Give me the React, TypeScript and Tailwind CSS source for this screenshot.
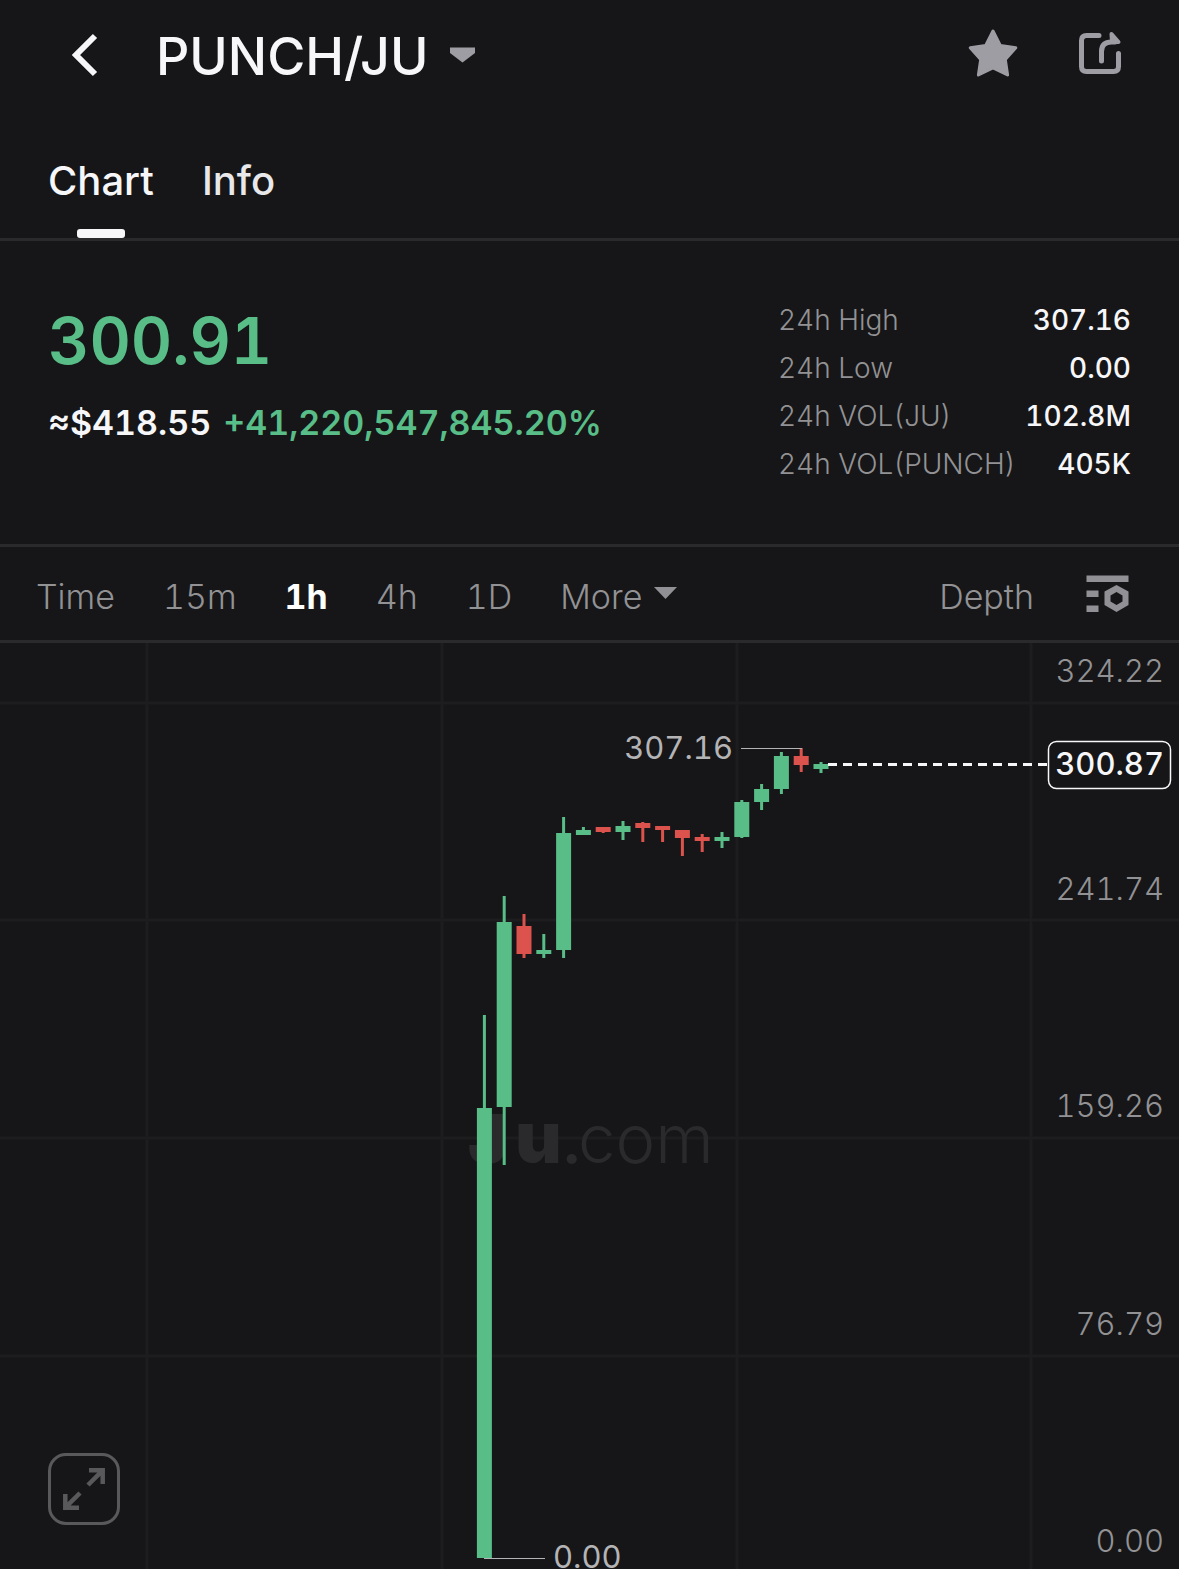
import { useState } from "react";
import clsx from "clsx";

type Candle = {
    up: boolean;
    high: number;
    top: number;
    bottom: number;
    low: number;
};

const stats = [
    { label: "24h High", value: "307.16" },
    { label: "24h Low", value: "0.00" },
    { label: "24h VOL(JU)", value: "102.8M" },
    { label: "24h VOL(PUNCH)", value: "405K" },
];

const intervals = ["Time", "15m", "1h", "4h", "1D"];

// y positions in chart units
const candles: Candle[] = [
    { up: true, high: 372, top: 465, bottom: 915, low: 915 },
    { up: true, high: 253, top: 279, bottom: 464, low: 522 },
    { up: false, high: 271, top: 283, bottom: 311, low: 315 },
    { up: true, high: 291, top: 307, bottom: 311, low: 315 },
    { up: true, high: 174, top: 190, bottom: 307, low: 315 },
    { up: true, high: 184, top: 187, bottom: 192, low: 192 },
    { up: false, high: 184, top: 184, bottom: 189, low: 190 },
    { up: true, high: 178, top: 183, bottom: 189, low: 197 },
    { up: false, high: 179, top: 180, bottom: 185, low: 199 },
    { up: false, high: 183, top: 183, bottom: 187, low: 199 },
    { up: false, high: 187, top: 187, bottom: 195, low: 213 },
    { up: false, high: 191, top: 194, bottom: 198, low: 209 },
    { up: true, high: 189, top: 194, bottom: 198, low: 205 },
    { up: true, high: 157, top: 159, bottom: 194, low: 195 },
    { up: true, high: 141, top: 146, bottom: 159, low: 167 },
    { up: true, high: 109, top: 113, bottom: 146, low: 151 },
    { up: false, high: 105, top: 113, bottom: 122, low: 129 },
    { up: true, high: 119, top: 121, bottom: 126, low: 130 },
];

const firstCandleX = 484.4;
const candleStep = 19.8;

const gridX = [147, 442, 737, 1031];
const gridY = [60, 277, 495, 713];

const axisLabels = [
    { text: "324.22", y: 39 },
    { text: "241.74", y: 257 },
    { text: "159.26", y: 474 },
    { text: "76.79", y: 692 },
    { text: "0.00", y: 909 },
];

function CandleChart() {
    return (
        <svg viewBox="0 0 1179 926" className="block w-full h-auto tabular-nums" role="img" aria-label="PUNCH/JU 1h candles">
            <g stroke="#1d1d1f" strokeWidth="3">
                {gridX.map((x) => <line key={x} x1={x} x2={x} y1="0" y2="926" />)}
                {gridY.map((y) => <line key={y} x1="0" x2="1179" y1={y} y2={y} />)}
            </g>

            {/* Watermark */}
            <text y="520" fontSize="67" fill="#2a2a2d">
                <tspan x="468" className="font-black">J</tspan>
                <tspan x="515" className="font-black" fontSize="72">u</tspan>
                <tspan x="565" className="font-black" fontSize="50">.</tspan>
                <tspan x="578" className="font-light">com</tspan>
            </text>

            {candles.map((c, i) => {
                const x = firstCandleX + i * candleStep;
                return (
                    <g key={i} fill={c.up ? "#58bd87" : "#dc524c"}>
                        <rect x={x - 1.5} y={c.high} width="3" height={c.low - c.high} />
                        <rect x={x - 7.5} y={c.top} width="15" height={c.bottom - c.top} />
                    </g>
                );
            })}

            {/* High and low markers */}
            <g stroke="#b4b4b6" strokeWidth="1">
                <line x1="741" x2="802" y1="105.5" y2="105.5" />
                <line x1="484" x2="545" y1="915.5" y2="915.5" />
            </g>
            <g fill="#b4b4b6" fontSize="31">
                <text x="733" y="116" textAnchor="end">307.16</text>
                <text x="553" y="925">0.00</text>
            </g>

            <g fill="#929294" fontSize="31" textAnchor="end" className="font-light">
                {axisLabels.map((l) => <text key={l.text} x="1164" y={l.y}>{l.text}</text>)}
            </g>

            {/* Last price */}
            <line x1="828" x2="1048" y1="121.5" y2="121.5" stroke="#f7f7fa" strokeWidth="3" strokeDasharray="9 6" />
            <rect x="1048.5" y="98.5" width="122" height="47" rx="8" fill="#161618" stroke="#f7f7fa" strokeWidth="1.5" />
            <text x="1164" y="132" textAnchor="end" fontSize="31" fill="#f7f7fa" className="font-medium">300.87</text>
        </svg>
    );
}

export default function App() {
    const [tab, setTab] = useState("Chart");
    const [interval, setInterval] = useState("1h");

    return (
        <main className="min-h-screen bg-[#161618] text-[#f7f7fa] font-['Inter','Noto_Sans',sans-serif]">
            <header className="flex items-center h-28 pl-[70px] pr-[57px]">
                <button type="button" aria-label="Back" className="pb-0.5">
                    <svg width="30" height="44" viewBox="0 0 30 44" fill="none" stroke="currentColor" strokeWidth="6">
                        <path d="M25 3 L6 22 L25 41" />
                    </svg>
                </button>
                <button type="button" className="flex items-center gap-[22px] ml-[56px]">
                    <h1 className="pt-0.5 text-[52px] leading-[64px] font-medium">PUNCH/JU</h1>
                    <svg width="26" height="18" viewBox="0 0 26 18" fill="#9e9da3">
                        <path d="M0 0.5H25V6L12.5 15.5L0 6Z" />
                    </svg>
                </button>
                <div className="flex items-center gap-[60px] ml-auto pb-1.5">
                    <button type="button" aria-label="Favorite">
                        <svg width="50" height="50" viewBox="0 0 50 50" fill="#9e9da3" stroke="#9e9da3" strokeWidth="3" strokeLinejoin="round">
                            <path d="M25 3 L32.3 17.5 L47.8 19.8 L37.3 31.5 L39.6 47 L25 40 L10.4 47 L12.7 31.5 L2.2 19.8 L17.7 17.5Z" />
                        </svg>
                    </button>
                    <button type="button" aria-label="Share">
                        <svg width="44" height="46" viewBox="0 0 44 46" fill="none" stroke="#9e9da3" strokeWidth="5" strokeLinecap="round" strokeLinejoin="round">
                            <path d="M21 5.5H8.5Q3.5 5.5 3.5 10.5V36.5Q3.5 41.5 8.5 41.5H35.5Q40.5 41.5 40.5 36.5V23.5" />
                            <path d="M23.5 31V21.5Q23.5 12 33.5 12H37" />
                            <path d="M33.5 4L40.5 12H34Z" fill="#9e9da3" strokeWidth="4" />
                        </svg>
                    </button>
                </div>
            </header>

            <nav className="flex gap-12 px-12 border-b-3 border-[#2a2a2c]">
                {["Chart", "Info"].map((name) => (
                    <button
                        key={name}
                        type="button"
                        onClick={() => setTab(name)}
                        className={clsx("flex flex-col items-center pt-[45px]", tab === name ? "text-[#f7f7fa]" : "text-[#e8e8ea]")}
                    >
                        <span className="text-[40px] leading-[48px] font-medium">{name}</span>
                        <span className={clsx("w-12 h-[9px] mt-6 rounded-[3px]", tab === name && "bg-[#f7f7fa]")} />
                    </button>
                ))}
            </nav>

            <section className="flex justify-between px-12 pt-[55px] pb-[56px] border-b-3 border-[#2a2a2c] tabular-nums">
                <div>
                    <p className="text-[64px] leading-[90px] font-semibold text-[#58bd87]">300.91</p>
                    <p className="flex gap-3 mt-[15px] text-[34px] leading-[44px] font-semibold">
                        <span>≈$418.55</span>
                        <span className="text-[#58bd87]">+41,220,547,845.20%</span>
                    </p>
                </div>
                <dl className="w-[353px]">
                    {stats.map((s) => (
                        <div key={s.label} className="flex justify-between text-[28px] leading-[48px] whitespace-nowrap">
                            <dt className="font-light text-[#929294]">{s.label}</dt>
                            <dd className="font-medium">{s.value}</dd>
                        </div>
                    ))}
                </dl>
            </section>

            <div className="flex items-center h-24 pl-9 pr-[50px] border-b-3 border-[#2a2a2c] text-[34px] leading-[44px] font-light tabular-nums text-[#929294]">
                <div className="flex items-center gap-12 pt-1.5">
                    {intervals.map((name) => (
                        <button
                            key={name}
                            type="button"
                            onClick={() => setInterval(name)}
                            className={clsx(interval === name && "font-bold text-white")}
                        >
                            {name}
                        </button>
                    ))}
                    <button type="button" className="flex items-center gap-3">
                        More
                        <svg width="23" height="20" viewBox="0 0 23 20" fill="#919095">
                            <path d="M0 0H23L11.5 12Z" />
                        </svg>
                    </button>
                </div>
                <div className="flex items-center gap-[52px] ml-auto">
                    <button type="button" className="pt-1.5">Depth</button>
                    <button type="button" aria-label="Chart settings">
                        <svg width="43" height="38" viewBox="0 0 43 38" fill="#919095">
                            <path d="M0.5 0.5H42.5V7H0.5Z M0.5 15.5H12.5V22H0.5Z M0.5 30.5H12.5V37H0.5Z" />
                            <path fillRule="evenodd" d="M30.5 10L42.5 16.5V30L30.5 37L18.5 30V16.5Z M30.5 17L24.5 20.5V26.5L30.5 30L36.5 26.5V20.5Z" />
                        </svg>
                    </button>
                </div>
            </div>

            <section className="relative">
                <CandleChart />
                <button
                    type="button"
                    aria-label="Full screen"
                    className="absolute left-12 bottom-11 flex items-center justify-center size-[72px] rounded-[18px] border-3 border-[#59595b]"
                >
                    <svg width="42" height="42" viewBox="0 0 42 42" fill="none" stroke="#59595b" strokeWidth="4.5">
                        <path d="M26 2.3H39.7V16 M39.7 2.3L25 17" />
                        <path d="M16 39.7H2.3V26 M2.3 39.7L17 25" />
                    </svg>
                </button>
            </section>
        </main>
    );
}
